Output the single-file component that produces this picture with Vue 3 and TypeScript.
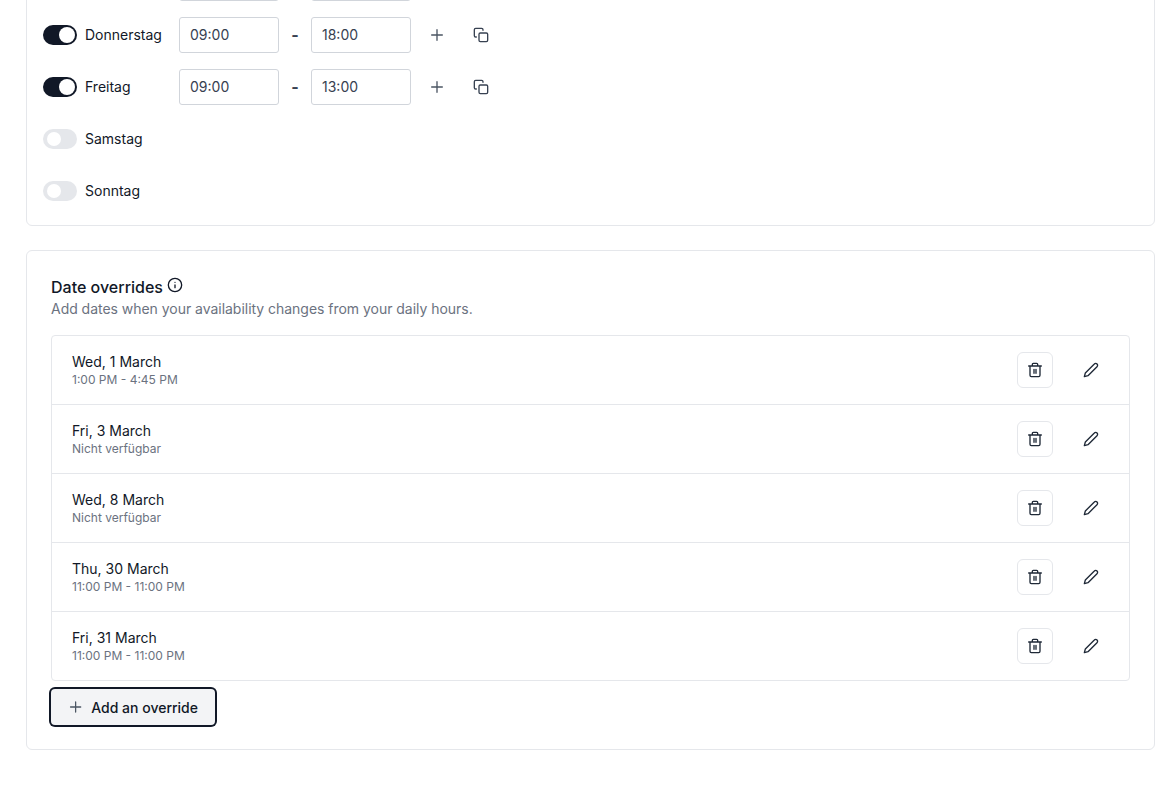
<script setup lang="ts">
interface Day { name: string; on: boolean; from?: string; to?: string; clipped?: boolean }
const days: Day[] = [
  { name: '', on: true, clipped: true },
  { name: 'Donnerstag', on: true, from: '09:00', to: '18:00' },
  { name: 'Freitag', on: true, from: '09:00', to: '13:00' },
  { name: 'Samstag', on: false },
  { name: 'Sonntag', on: false },
]
const overrides = [
  { date: 'Wed, 1 March', time: '1:00 PM - 4:45 PM' },
  { date: 'Fri, 3 March', time: 'Nicht verfügbar' },
  { date: 'Wed, 8 March', time: 'Nicht verfügbar' },
  { date: 'Thu, 30 March', time: '11:00 PM - 11:00 PM' },
  { date: 'Fri, 31 March', time: '11:00 PM - 11:00 PM' },
]
</script>

<template>
  <div class="page">
    <section class="card hours">
      <div v-for="(d, i) in days" :key="i" class="day">
        <div class="toggle-wrap">
          <span v-if="!d.clipped" class="toggle" :class="{ on: d.on }"><span class="knob"></span></span>
          <span class="day-name">{{ d.name }}</span>
        </div>
        <template v-if="d.on">
          <div class="field">{{ d.from }}</div>
          <span class="dash">{{ d.clipped ? '' : '-' }}</span>
          <div class="field">{{ d.to }}</div>
          <template v-if="!d.clipped">
            <button class="ghost plus-btn" type="button">
              <svg width="16" height="16" viewBox="0 0 24 24" fill="none" stroke="#4b5563" stroke-width="2" stroke-linecap="round">
                <path d="M12 4v16M4 12h16" />
              </svg>
            </button>
            <button class="ghost copy-btn" type="button">
              <svg width="16" height="16" viewBox="0 0 24 24" fill="none" stroke="#374151" stroke-width="2" stroke-linecap="round" stroke-linejoin="round">
                <rect x="9" y="9" width="13" height="13" rx="2" />
                <path d="M5 15H4a2 2 0 0 1-2-2V4a2 2 0 0 1 2-2h9a2 2 0 0 1 2 2v1" />
              </svg>
            </button>
          </template>
        </template>
      </div>
    </section>

    <section class="card overrides">
      <h3 class="title">
        Date overrides
        <svg class="info" width="16" height="16" viewBox="0 0 24 24" fill="none" stroke="#111827" stroke-width="2" stroke-linecap="round">
          <circle cx="12" cy="12" r="10" />
          <path d="M12 16v-4M12 8h.01" />
        </svg>
      </h3>
      <p class="subtitle">Add dates when your availability changes from your daily hours.</p>
      <ul class="list">
        <li v-for="o in overrides" :key="o.date" class="row">
          <div class="info-col">
            <div class="date">{{ o.date }}</div>
            <div class="time">{{ o.time }}</div>
          </div>
          <button class="icon-btn bordered" type="button">
            <svg width="16" height="16" viewBox="0 0 24 24" fill="none" stroke="#1f2937" stroke-width="2" stroke-linecap="round" stroke-linejoin="round">
              <path d="M2.500 6h19M8 6V3.500A1.500 1.500 0 0 1 9.500 2h5A1.500 1.500 0 0 1 16 3.500V6M19.500 6v14a2 2 0 0 1-2 2h-11a2 2 0 0 1-2-2V6" />
              <path d="M10.500 11v6M13.500 11v6" />
            </svg>
          </button>
          <button class="icon-btn" type="button">
            <svg width="16" height="16" viewBox="0 0 24 24" fill="none" stroke="#1f2937" stroke-width="2" stroke-linecap="round" stroke-linejoin="round">
              <path d="M17 3a2.830 2.830 0 1 1 4 4L7.500 20.500 2 22l1.500-5.500L17 3z" />
            </svg>
          </button>
        </li>
      </ul>
      <button class="add" type="button">
        <svg width="16" height="16" viewBox="0 0 24 24" fill="none" stroke="#4b5563" stroke-width="2" stroke-linecap="round">
          <path d="M12 4v16M4 12h16" />
        </svg>
        Add an override
      </button>
    </section>
  </div>
</template>

<style>
html, body { margin: 0; background: #fff; overflow: hidden; }
</style>

<style scoped>
.page {
  height: 796px;
  overflow: hidden;
  box-sizing: border-box;
  padding: 0 17px 0 26px;
  font-family: Inter, "Liberation Sans", sans-serif;
  color: #111827;
}
.card {
  background: #fff;
  border: 1px solid #e5e7eb;
  border-radius: 6px;
}
.hours {
  margin-top: -52px;
  padding: 16px;
  display: flex;
  flex-direction: column;
  gap: 16px;
  margin-bottom: 24px;
  height: 278px;
  box-sizing: border-box;
  justify-content: flex-end;
}
.day {
  display: flex;
  align-items: center;
  height: 36px;
  flex: none;
}
.toggle-wrap {
  display: flex;
  align-items: center;
  gap: 8px;
  width: 136px;
}
.toggle {
  width: 34px;
  height: 20px;
  border-radius: 10px;
  background: #e5e7eb;
  display: flex;
  align-items: center;
  padding: 0 2px;
  box-sizing: border-box;
}
.toggle.on { background: #111827; justify-content: flex-end; }
.knob {
  width: 16px;
  height: 16px;
  border-radius: 50%;
  background: #fff;
  display: block;
}
.toggle:not(.on) .knob { width: 14px; height: 14px; margin-left: 2px; }
.day-name { font-size: 14px; line-height: 20px; }
.field {
  width: 100px;
  height: 36px;
  box-sizing: border-box;
  border: 1px solid #d1d5db;
  border-radius: 3px;
  padding: 0 10px;
  font-size: 14px;
  line-height: 34px;
  color: #374151;
}
.dash {
  width: 32px;
  text-align: center;
  font-size: 16px;
  font-weight: 700;
  color: #374151;
}
.ghost {
  width: 36px;
  height: 36px;
  background: none;
  border: 0;
  padding: 0;
  display: flex;
  align-items: center;
  justify-content: center;
}
.plus-btn { margin-left: 8px; }
.copy-btn { margin-left: 8px; }
.overrides { padding: 24px; height: 500px; box-sizing: border-box; }
.title {
  margin: 0;
  font-size: 16px;
  font-weight: 500;
  line-height: 24px;
  display: flex;
  align-items: flex-start;
}
.info { margin-left: 4px; margin-top: 2px; }
.subtitle {
  margin: 0 0 16px;
  font-size: 14px;
  line-height: 20px;
  letter-spacing: -0.03px;
  color: #6b7280;
}
.list {
  list-style: none;
  margin: 0;
  padding: 0;
  border: 1px solid #e5e7eb;
  border-radius: 4px;
}
.row {
  height: 69px;
  box-sizing: border-box;
  display: flex;
  align-items: center;
  padding: 0 20px;
  border-bottom: 1px solid #e5e7eb;
}
.row:last-child { border-bottom: 0; height: 68px; }
.info-col { flex: 1; }
.date { font-size: 14px; line-height: 20px; }
.time { font-size: 12px; line-height: 16px; color: #6b7280; }
.icon-btn {
  width: 36px;
  height: 36px;
  box-sizing: border-box;
  background: #fff;
  border: 1px solid transparent;
  border-radius: 6px;
  padding: 0;
  display: flex;
  align-items: center;
  justify-content: center;
  margin-left: 20px;
}
.icon-btn.bordered { border-color: #e5e7eb; }
.add {
  margin-top: 8px;
  height: 36px;
  width: 164px;
  box-sizing: border-box;
  display: flex;
  align-items: center;
  gap: 8px;
  padding: 0 17px;
  background: #f3f4f6;
  border: 0;
  border-radius: 4px;
  box-shadow: 0 0 0 2px #111827;
  font-family: inherit;
  font-size: 14px;
  font-weight: 500;
  color: #111827;
  white-space: nowrap;
}
</style>
